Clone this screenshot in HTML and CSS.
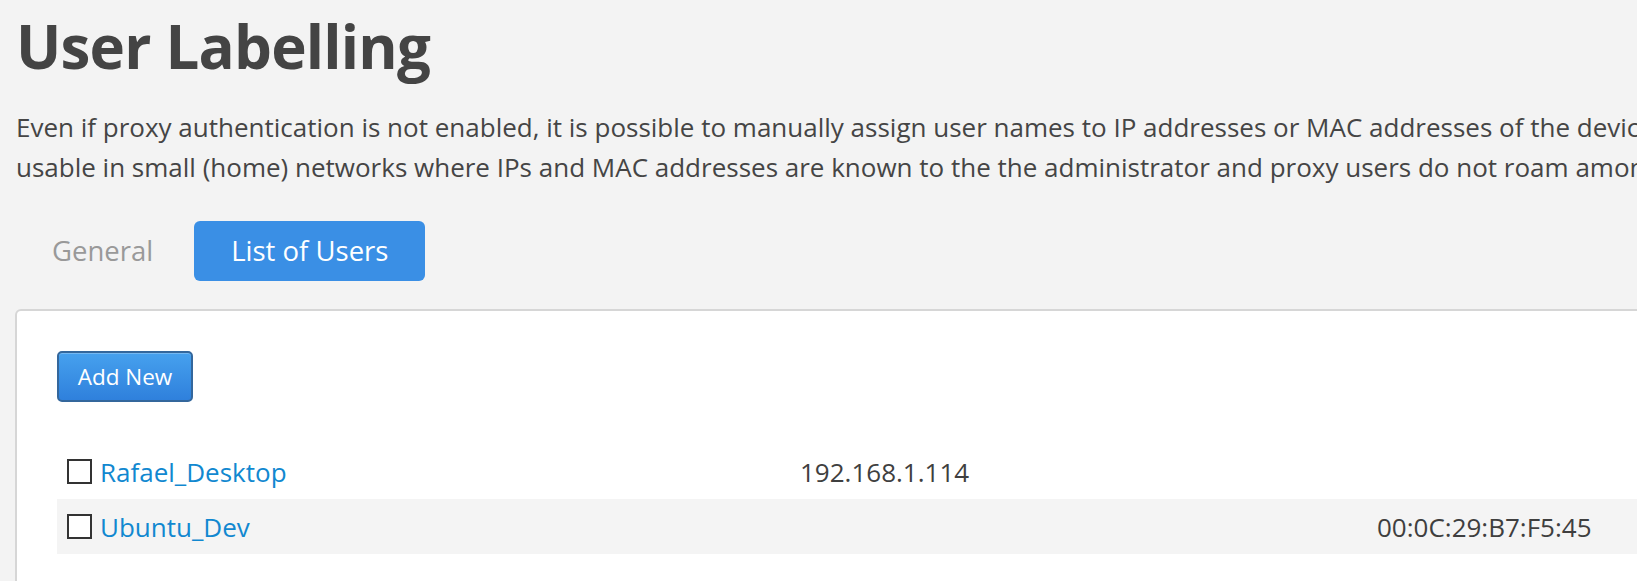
FILE: index.html
```html
<!DOCTYPE html>
<html>
<head>
<meta charset="utf-8">
<link rel="stylesheet" href="styles.css">
</head>
<body>
<div class="page">
  <h1 class="title">User Labelling</h1>
  <p class="intro"><span class="line">Even if proxy authentication is not enabled, it is possible to manually assign user names to IP addresses or MAC addresses of the devices in the network.</span><span class="line">usable in small (home) networks where IPs and MAC addresses are known to the the administrator and proxy users do not roam among the devices.</span></p>
  <div class="tabs">
    <span class="tab">General</span>
    <span class="tab tab-active">List of Users</span>
  </div>
  <div class="panel">
    <button class="btn-add">Add New</button>
    <div class="list">
      <div class="row">
        <div class="cell name"><span class="check"></span><a class="link">Rafael_Desktop</a></div>
        <div class="cell ip">192.168.1.114</div>
        <div class="cell mac"></div>
      </div>
      <div class="row row-alt">
        <div class="cell name"><span class="check"></span><a class="link">Ubuntu_Dev</a></div>
        <div class="cell ip"></div>
        <div class="cell mac">00:0C:29:B7:F5:45</div>
      </div>
    </div>
  </div>
</div>
</body>
</html>
```

FILE: styles.css
```css
html, body {
  margin: 0;
  padding: 0;
  overflow: hidden;
}
body {
  background: #f3f3f3;
  font-family: "Open Sans", "Noto Sans", sans-serif;
  color: #444;
}
.page {
  width: 1900px;
  padding: 0 0 0 15px;
}
.title {
  margin: 0;
  padding: 6px 0 0 1px;
  font-size: 60px;
  font-weight: 700;
  line-height: 80px;
  color: #444;
  letter-spacing: -0.8px;
}
.intro {
  margin: 21px 0 0 1px;
  font-size: 26px;
  line-height: 40px;
  color: #454545;
}
.line {
  display: block;
  white-space: nowrap;
}
.tabs {
  display: flex;
  align-items: center;
  gap: 4px;
  margin-top: 34px;
}
.tab {
  display: inline-block;
  font-size: 27.5px;
  line-height: 60px;
  padding: 0 37px;
  color: #999;
  border-radius: 6px;
}
.tab-active {
  background: #3a8fe5;
  color: #fff;
}
.panel {
  margin-top: 28px;
  background: #fff;
  border: 2px solid #d6d6d6;
  border-radius: 6px;
  padding: 40px 40px 60px 40px;
}
.btn-add {
  display: block;
  font-family: "Open Sans", "Noto Sans", sans-serif;
  font-size: 22.5px;
  color: #fff;
  width: 136px;
  height: 51px;
  padding: 0;
  border: 2px solid #34679c;
  border-radius: 5px;
  background: linear-gradient(#46a1ee, #2f80dc);
  box-shadow: inset 0 1px 0 rgba(255,255,255,0.25);
}
.list {
  margin-top: 42px;
}
.row {
  display: grid;
  grid-template-columns: 743px 577px 1fr;
  height: 55px;
  align-items: center;
  font-size: 26px;
}
.row-alt {
  background: #f4f4f4;
}
.cell.name {
  display: flex;
  align-items: center;
  padding-left: 10px;
}
.check {
  display: inline-block;
  width: 21px;
  height: 21px;
  border: 2.5px solid #333;
  margin-right: 8px;
  background: #fff;
}
.link {
  color: #1188d0;
  text-decoration: none;
}
.ip, .mac {
  color: #3f3f3f;
}
```
